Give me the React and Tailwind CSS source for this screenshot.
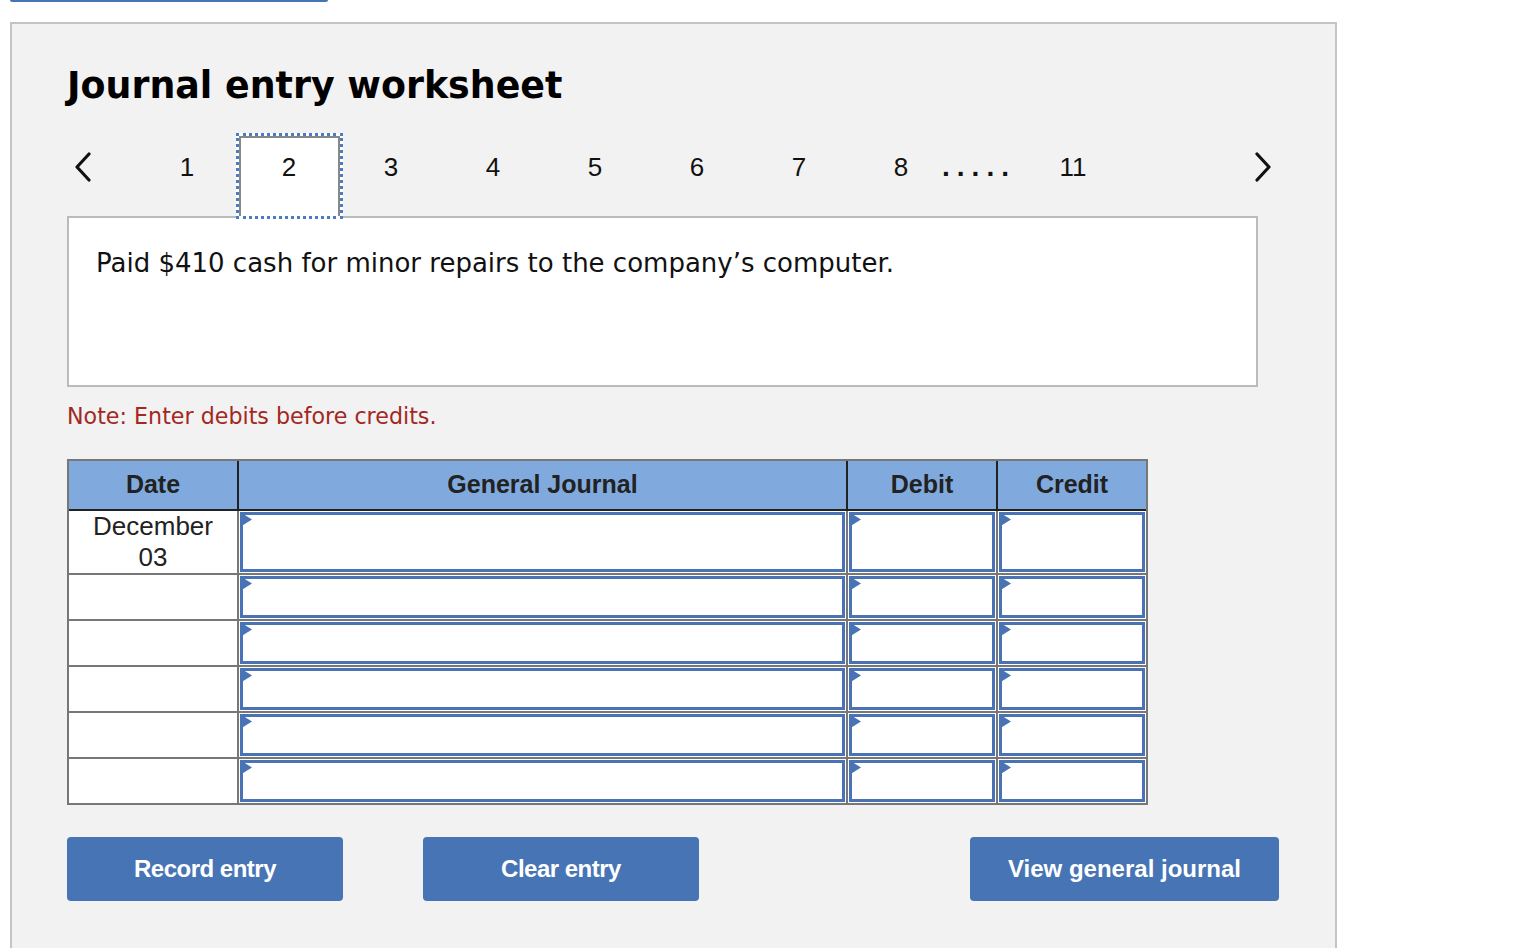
import React from 'react'

const pages = ['1', '2', '3', '4', '5', '6', '7', '8']

function Chevron({ dir }) {
  const pts = dir === 'left' ? '15,2 3,15 15,28' : '3,2 15,15 3,28'
  return (
    <svg width="18" height="30" viewBox="0 0 18 30" className="shrink-0">
      <polyline points={pts} fill="none" stroke="#111" strokeWidth="3.2" strokeLinecap="round" strokeLinejoin="round" />
    </svg>
  )
}

function InputCell() {
  return (
    <div className="relative h-full bg-white p-px">
      <div className="h-full border-[3px] border-[#4a73b5] bg-white" />
      <svg width="12" height="15" viewBox="0 0 12 15" className="absolute left-[1px] top-[1px]">
        <polygon points="0,0 12,7.5 0,15" fill="#4a73b5" />
      </svg>
    </div>
  )
}

function Row({ h, last, date }) {
  return (
    <div className={`flex ${h} ${last ? '' : 'border-b-2 border-[#777]'}`}>
      <div className="flex w-[170px] shrink-0 items-center justify-center border-r-2 border-[#777] bg-white text-center text-[26px] leading-[31px] text-[#222]">
        {date}
      </div>
      <div className="w-[609px] shrink-0 border-r-2 border-[#777]">
        <InputCell />
      </div>
      <div className="w-[150px] shrink-0 border-r-2 border-[#777]">
        <InputCell />
      </div>
      <div className="flex-1">
        <InputCell />
      </div>
    </div>
  )
}

export default function App() {
  return (
    <div className="min-h-screen bg-white font-['Liberation_Sans',Arial,sans-serif]">
      <div className="ml-[10px] h-[2px] w-[318px] rounded-b-[3px] bg-[#4674b4]" />

      <div className="ml-[10px] mt-[20px] w-[1327px] border-2 border-b-0 border-[#c4c4c4] bg-[#f2f2f2] pb-[60px] pl-[55px] pt-[44px]">
        <h1 className="font-['DejaVu_Sans',Verdana,sans-serif] text-[36.4px] font-bold leading-[36px] text-black">
          Journal entry worksheet
        </h1>

        <div className="relative z-10 -mb-[3px] mt-[29px] flex h-[86px] items-start text-[26px] text-[#111]">
          <div className="flex h-[68px] w-[69px] shrink-0 items-center pl-[7px]">
            <Chevron dir="left" />
          </div>
          {pages.map(p => (
            <div key={p} className="flex h-[86px] w-[102px] shrink-0 justify-center">
              {p === '2' ? (
                <div className="h-[86px] w-[107px] shrink-0 border-[3px] border-dotted border-[#4a7cc4] bg-white">
                  <div className="flex h-full items-start justify-center border-2 border-b-0 border-[#888]">
                    <span className="mt-[12px] leading-[34px]">2</span>
                  </div>
                </div>
              ) : (
                <span className="flex h-[68px] items-center">{p}</span>
              )}
            </div>
          ))}
          <div className="flex h-[68px] w-[48px] shrink-0 items-center justify-center">
            <span className="pl-[6px] text-[28px] font-bold tracking-[7px]">.....</span>
          </div>
          <div className="flex h-[68px] w-[146px] shrink-0 items-center justify-center">11</div>
          <div className="ml-[108px] flex h-[68px] items-center">
            <Chevron dir="right" />
          </div>
        </div>

        <div className="h-[171px] w-[1191px] border-2 border-[#bbb] bg-white pl-[27px] pt-[29px] font-['DejaVu_Sans',Verdana,sans-serif] text-[26px] leading-[32px] text-[#111]">
          Paid $410 cash for minor repairs to the company’s computer.
        </div>

        <p className="mt-[15px] font-['DejaVu_Sans',Verdana,sans-serif] text-[22.2px] leading-[28px] text-[#a3281f]">
          Note: Enter debits before credits.
        </p>

        <div className="mt-[29px] w-[1081px] border-2 border-[#777]">
          <div className="flex h-[50px] border-b-2 border-[#222] bg-[#80aade] text-[25px] font-bold text-[#222]">
            <div className="flex w-[170px] shrink-0 items-center justify-center border-r-2 border-[#222]">Date</div>
            <div className="flex w-[609px] shrink-0 items-center justify-center border-r-2 border-[#222]">General Journal</div>
            <div className="flex w-[150px] shrink-0 items-center justify-center border-r-2 border-[#222]">Debit</div>
            <div className="flex flex-1 items-center justify-center">Credit</div>
          </div>
          <Row h="h-[64px]" date={<span>December<br />03</span>} />
          <Row h="h-[46px]" />
          <Row h="h-[46px]" />
          <Row h="h-[46px]" />
          <Row h="h-[46px]" />
          <Row h="h-[44px]" last />
        </div>

        <div className="mt-[32px] flex text-[24px] font-bold text-white">
          <button className="h-[64px] w-[276px] rounded-[4px] bg-[#4674b4] tracking-[-0.5px]">Record entry</button>
          <button className="ml-[80px] h-[64px] w-[276px] rounded-[4px] bg-[#4674b4] tracking-[-0.5px]">Clear entry</button>
          <button className="ml-[271px] h-[64px] w-[309px] rounded-[4px] bg-[#4674b4]">View general journal</button>
        </div>
      </div>
    </div>
  )
}
